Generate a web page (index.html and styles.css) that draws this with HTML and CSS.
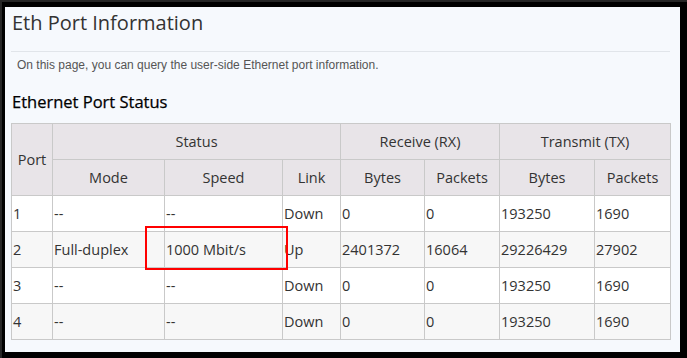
FILE: index.html
```html
<!DOCTYPE html>
<html lang="en">
<head>
    <meta charset="UTF-8">
    <meta name="viewport" content="width=device-width, initial-scale=1.0">
    <title>Eth Port Information</title>
    <link rel="stylesheet" href="styles.css">
</head>
<body>
    <div class="screen">
        <div class="page">
            <h1 class="title">Eth Port Information</h1>
            <div class="divider"></div>
            <p class="desc">On this page, you can query the user-side Ethernet port information.</p>
            <h2 class="section">Ethernet Port Status</h2>
            <div class="table-wrap">
                <table class="ports">
                    <colgroup>
                        <col style="width: 41px">
                        <col style="width: 112px">
                        <col style="width: 118px">
                        <col style="width: 58px">
                        <col style="width: 84px">
                        <col style="width: 75px">
                        <col style="width: 95px">
                        <col style="width: 76px">
                    </colgroup>
                    <thead>
                        <tr>
                            <th rowspan="2">Port</th>
                            <th colspan="3">Status</th>
                            <th colspan="2">Receive (RX)</th>
                            <th colspan="2">Transmit (TX)</th>
                        </tr>
                        <tr>
                            <th>Mode</th>
                            <th>Speed</th>
                            <th>Link</th>
                            <th>Bytes</th>
                            <th>Packets</th>
                            <th>Bytes</th>
                            <th>Packets</th>
                        </tr>
                    </thead>
                    <tbody>
                        <tr>
                            <td>1</td><td>--</td><td>--</td><td>Down</td><td>0</td><td>0</td><td>193250</td><td>1690</td>
                        </tr>
                        <tr>
                            <td>2</td><td>Full-duplex</td><td>1000 Mbit/s</td><td>Up</td><td>2401372</td><td>16064</td><td>29226429</td><td>27902</td>
                        </tr>
                        <tr>
                            <td>3</td><td>--</td><td>--</td><td>Down</td><td>0</td><td>0</td><td>193250</td><td>1690</td>
                        </tr>
                        <tr>
                            <td>4</td><td>--</td><td>--</td><td>Down</td><td>0</td><td>0</td><td>193250</td><td>1690</td>
                        </tr>
                    </tbody>
                </table>
                <div class="highlight"></div>
            </div>
        </div>
    </div>
</body>
</html>
```

FILE: styles.css
```css
* {
    margin: 0;
    padding: 0;
    box-sizing: border-box;
}

body {
    background-color: #262626;
    font-family: 'Open Sans', 'DejaVu Sans', sans-serif;
    color: #333333;
}

.screen {
    padding: 2px 0 0 2px;
    height: 358px;
}

.page {
    width: 685px;
    height: 356px;
    background-color: #f6f9fd;
    border-style: solid;
    border-color: #000000;
    border-width: 5px 7px 6px 3px;
    padding: 0 10px 0 6px;
}

.title {
    font-size: 20px;
    font-weight: normal;
    line-height: 30px;
    padding: 1px 0 0 1px;
    height: 44px;
    color: #333333;
}

.divider {
    height: 1px;
    background-color: #e1e5ea;
}

.desc {
    font-family: 'Liberation Sans', Arial, sans-serif;
    font-size: 12px;
    line-height: 14px;
    color: #555555;
    padding: 6px 0 0 6px;
    height: 39px;
}

.section {
    font-size: 16.5px;
    font-weight: normal;
    line-height: 22px;
    padding-left: 1px;
    height: 32px;
    color: #000000;
    -webkit-text-stroke: 0.25px #000000;
}

.table-wrap {
    position: relative;
}

.ports {
    border-collapse: collapse;
    table-layout: fixed;
    width: 659px;
}

.ports th,
.ports td {
    border: 1px solid #c9c9c9;
    height: 36px;
    font-size: 14.5px;
}

.ports th {
    background-color: #e8e4e8;
    font-weight: normal;
    text-align: center;
    color: #333333;
}

.ports td {
    text-align: left;
    padding-left: 1px;
    background-color: #ffffff;
    color: #333333;
    white-space: nowrap;
}

.ports tbody tr:nth-child(even) td {
    background-color: #f7f7f7;
}

.highlight {
    position: absolute;
    left: 134px;
    top: 103px;
    width: 143px;
    height: 44px;
    border: 2px solid #ff0000;
}
```
